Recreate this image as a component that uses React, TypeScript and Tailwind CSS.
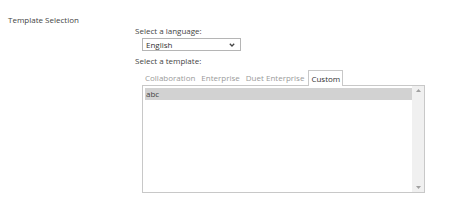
import React from "react";

export default function App() {
  return (
    <div className="w-[474px] h-[203px] bg-white text-[#444] font-['Open_Sans',sans-serif] text-[8px] leading-[12px] flex">
      <div className="w-[135px] pl-[8px] pt-[14px] shrink-0">Template Selection</div>
      <div className="flex flex-col pt-[25px]">
        <div>Select a language:</div>
        <div className="ml-[7px] mt-[1px] w-[99px] h-[13px] border border-[#b5b5b5] flex items-center justify-between pl-[3px] pr-[5px] text-[#333]">
          <span>English</span>
          <svg width="6" height="4" viewBox="0 0 6 4">
            <path d="M0.8 0.8 L3 3 L5.2 0.8" stroke="#444" strokeWidth="1.3" fill="none" />
          </svg>
        </div>
        <div className="mt-[4px]">Select a template:</div>
        <div className="ml-[7px] mt-[3px] flex items-end h-[16px] relative z-10">
          <div className="flex gap-[6px] pl-[3px] text-[#9a9a9a] pb-[2px] pr-[4px]">
            <span>Collaboration</span>
            <span>Enterprise</span>
            <span>Duet Enterprise</span>
          </div>
          <div className="h-[16px] px-[2px] border border-b-0 border-[#c8c8c8] bg-white text-[#333] flex items-center">Custom</div>
        </div>
        <div className="ml-[7px] mt-[-1px] w-[283px] h-[108px] border border-[#c8c8c8] flex p-[2px] pr-0 pb-0">
          <div className="flex-1">
            <div className="h-[12px] bg-[#d2d2d2] pl-[1px] text-[#444] flex items-center">abc</div>
          </div>
          <div className="w-[12px] bg-[#f0f0f0] flex flex-col justify-between items-center py-[3px] -mt-[2px]">
            <svg width="5" height="3" viewBox="0 0 5 3"><path d="M0 3 L2.5 0 L5 3 Z" fill="#a0a0a0" /></svg>
            <svg width="5" height="3" viewBox="0 0 5 3"><path d="M0 0 L2.5 3 L5 0 Z" fill="#a0a0a0" /></svg>
          </div>
        </div>
      </div>
    </div>
  );
}
